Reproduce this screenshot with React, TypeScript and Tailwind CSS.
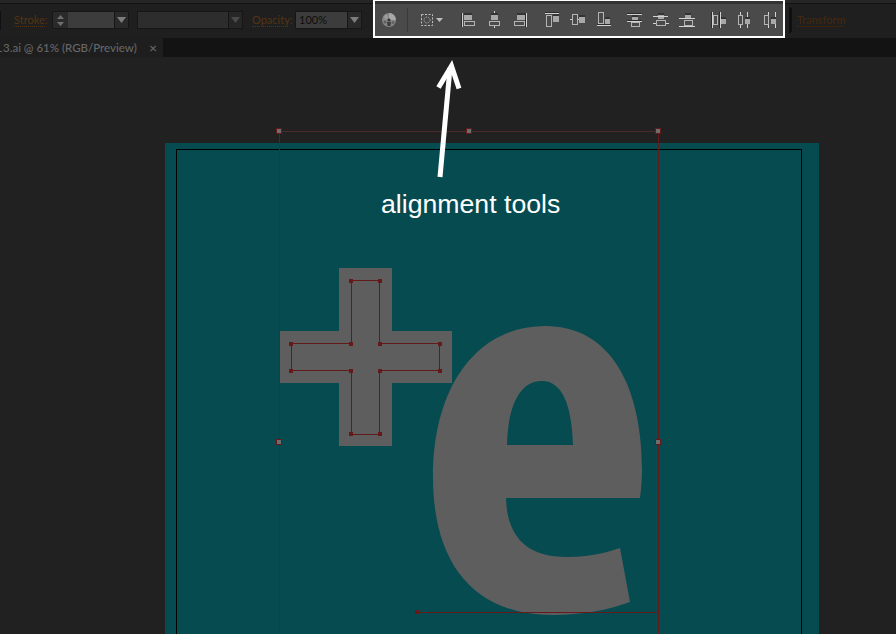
const uiFont = { fontFamily: 'Lato, "Open Sans", "Liberation Sans", sans-serif' };

function Arrow({ color = "#7d7d7d" }: { color?: string }) {
  return (
    <svg width="9" height="6" viewBox="0 0 9 6">
      <path d="M0 0H9L4.5 6Z" fill={color} />
    </svg>
  );
}

function Label({ text, width, color = "#553413" }: { text: string; width: string; color?: string }) {
  return (
    <span
      className={`block whitespace-nowrap border-b border-dotted text-[11px] leading-[13px] ${width}`}
      style={{ color, borderColor: color, ...uiFont }}
    >
      {text}
    </span>
  );
}

// filled block with the dark top edge these icons have
function Block({ x, y, w, h }: { x: number; y: number; w: number; h: number }) {
  return (
    <>
      <rect x={x} y={y} width={w} height={h} fill="#a8a8a8" />
      <rect x={x} y={y} width={w} height={2} fill="#333333" />
    </>
  );
}

function Box({ x, y, w, h }: { x: number; y: number; w: number; h: number }) {
  return <rect x={x + 0.5} y={y + 0.5} width={w - 1} height={h - 1} fill="none" stroke="#b4b4b4" />;
}

function HLine({ x, y, w }: { x: number; y: number; w: number }) {
  return (
    <>
      <rect x={x} y={y - 1} width={w} height={1} fill="#2c2c2c" />
      <rect x={x} y={y} width={w} height={1} fill="#d2d2d2" />
    </>
  );
}

function VLine({ x, y, h }: { x: number; y: number; h: number }) {
  return (
    <>
      <rect x={x - 1} y={y} width={1} height={h} fill="#2c2c2c" />
      <rect x={x} y={y} width={1} height={h} fill="#d2d2d2" />
    </>
  );
}

const alignIcons = [
  {
    x: 456,
    w: 25,
    draw: (
      <>
        <VLine x={462} y={13} h={14} />
        <Block x={464} y={13} w={8} h={7} />
        <Box x={464} y={21} w={11} h={5} />
      </>
    ),
  },
  {
    x: 481,
    w: 26,
    draw: (
      <>
        <Block x={491} y={13} w={7} h={7} />
        <Box x={489} y={21} w={11} h={5} />
        <rect x={494} y={11} width={1} height={2} fill="#d2d2d2" />
        <rect x={494} y={26} width={1} height={2} fill="#d2d2d2" />
      </>
    ),
  },
  {
    x: 507,
    w: 29,
    draw: (
      <>
        <VLine x={526} y={13} h={14} />
        <Block x={517} y={13} w={8} h={7} />
        <Box x={514} y={21} w={11} h={5} />
      </>
    ),
  },
  {
    x: 536,
    w: 29,
    draw: (
      <>
        <HLine x={545} y={13} w={14} />
        <Box x={546} y={15} w={6} h={12} />
        <Block x={553} y={14} w={6} h={8} />
      </>
    ),
  },
  {
    x: 565,
    w: 26,
    draw: (
      <>
        <rect x={570} y={19} width={15} height={1} fill="#c8c8c8" />
        <rect x={572} y={14} width={6} height={11} fill="#4a4a4a" />
        <Box x={572} y={14} w={6} h={11} />
        <Block x={579} y={15} w={6} h={8} />
      </>
    ),
  },
  {
    x: 591,
    w: 28,
    draw: (
      <>
        <HLine x={597} y={25} w={14} />
        <Box x={598} y={12} w={6} h={12} />
        <Block x={605} y={17} w={5} h={7} />
      </>
    ),
  },
  {
    x: 619,
    w: 28,
    draw: (
      <>
        <HLine x={627} y={14} w={15} />
        <Block x={632} y={15} w={6} h={5} />
        <HLine x={627} y={21} w={15} />
        <Box x={631} y={22} w={9} h={5} />
      </>
    ),
  },
  {
    x: 647,
    w: 26,
    draw: (
      <>
        <Block x={658} y={13} w={6} h={6} />
        <rect x={653} y={16} width={15} height={1} fill="#d2d2d2" />
        <Box x={656} y={20} w={10} h={6} />
        <rect x={653} y={23} width={3} height={1} fill="#d2d2d2" />
        <rect x={666} y={23} width={3} height={1} fill="#d2d2d2" />
      </>
    ),
  },
  {
    x: 673,
    w: 27,
    draw: (
      <>
        <Block x={685} y={13} w={6} h={5} />
        <rect x={679} y={18} width={16} height={1} fill="#d2d2d2" />
        <Box x={684} y={20} w={9} h={6} />
        <rect x={679} y={26} width={16} height={1} fill="#d2d2d2" />
      </>
    ),
  },
  {
    x: 700,
    w: 30,
    draw: (
      <>
        <VLine x={712} y={12} h={16} />
        <Box x={713} y={15} w={5} h={10} />
        <VLine x={720} y={12} h={16} />
        <Block x={721} y={17} w={5} h={7} />
      </>
    ),
  },
  {
    x: 730,
    w: 26,
    draw: (
      <>
        <rect x={740} y={12} width={1} height={16} fill="#d2d2d2" />
        <rect x={738} y={15} width={5} height={10} fill="#4a4a4a" />
        <Box x={738} y={15} w={5} h={10} />
        <rect x={747} y={12} width={1} height={16} fill="#d2d2d2" />
        <Block x={745} y={17} w={5} h={7} />
      </>
    ),
  },
  {
    x: 756,
    w: 27,
    draw: (
      <>
        <rect x={768} y={12} width={1} height={16} fill="#d2d2d2" />
        <Box x={764} y={15} w={5} h={10} />
        <rect x={775} y={12} width={1} height={16} fill="#d2d2d2" />
        <Block x={771} y={17} w={5} h={7} />
      </>
    ),
  },
];

const outlineHandles = [
  [279, 131],
  [469, 131],
  [658, 131],
  [279, 442],
  [658, 442],
];

const crossPoints = [
  [351, 281],
  [380, 281],
  [351, 344],
  [380, 344],
  [291, 344],
  [440, 344],
  [291, 371],
  [351, 371],
  [380, 371],
  [440, 371],
  [351, 434],
  [380, 434],
  [417, 612],
];

function Drawing() {
  return (
    <svg className="absolute inset-0" width="896" height="577" viewBox="0 57 896 577">
      <path
        d="M339 268H392V331H452V383H392V446H339V383H280V331H339Z"
        fill="#5e5e5e"
      />
      <path
        fillRule="evenodd"
        fill="#5e5e5e"
        d="M640 498H506C507 535 525 557 567 557C585 557 603 554 620 548L630 602C608 610 582 615 553 615C475 615 433 565 433 477C433 385 478 326 545 326C610 326 642 385 642 470C642 480 641 490 640 498ZM507 445C508 405 520 381 542 381C562 381 572 405 573 445Z"
      />

      {/* selection */}
      <g fill="none" strokeWidth="1">
        <path d="M279.5 131.5H658.5" stroke="#4a2a2a" />
        <path d="M279.5 131.5V634" stroke="#552428" />
        <path d="M658.5 131.5V634" stroke="#641a1a" />
        <path d="M417 612.5H658.5" stroke="#641a1a" />
        <path
          d="M351.5 280.5H379.5V343.5H439.5V370.5H379.5V434.5H351.5V370.5H291.5V343.5H351.5Z"
          stroke="#641a1a"
        />
      </g>
      {outlineHandles.map(([x, y]) => (
        <rect
          key={`${x}-${y}`}
          x={x - 2.5}
          y={y - 2.5}
          width="5"
          height="5"
          fill="#6e6e6e"
          stroke="#641a1a"
        />
      ))}
      {crossPoints.map(([x, y]) => (
        <rect key={`${x}-${y}`} x={x - 2} y={y - 2} width="4" height="4" fill="#641a1a" />
      ))}

      {/* annotation arrow */}
      <g stroke="#ffffff" strokeWidth="5" fill="none">
        <path d="M440 177L450 68" />
        <path d="M438.5 87.5L451.5 66L459 88.5" />
      </g>
    </svg>
  );
}

export default function App() {
  return (
    <div className="flex h-[634px] w-[896px] flex-col overflow-hidden bg-[#212121]">
      {/* control bar */}
      <div className="flex h-[38px] shrink-0 border-t-[3px] border-[#262626] bg-[#1f1f1f]">
        <div className="flex w-full items-center border-t border-[#121212] pb-[2px]">
          <div className="h-[19px] w-[1px] bg-[#111111]" />
          <div className="ml-[13px]">
            <Label text="Stroke:" width="w-[31px]" />
          </div>
          <div className="ml-[7px] flex h-[18px] border border-[#161616]">
            <div className="flex w-[15px] flex-col items-center justify-center gap-[3px] bg-[#2a2a2a]">
              <svg width="7" height="4" viewBox="0 0 7 4">
                <path d="M0 4L3.5 0L7 4Z" fill="#6e6e6e" />
              </svg>
              <svg width="7" height="4" viewBox="0 0 7 4">
                <path d="M0 0H7L3.5 4Z" fill="#6e6e6e" />
              </svg>
            </div>
            <div className="w-[46px] bg-[#3c3c3c]" />
            <div className="flex w-[14px] items-center justify-center border-l border-[#161616] bg-[#2a2a2a]">
              <Arrow />
            </div>
          </div>
          <div className="ml-[8px] flex h-[18px] w-[106px] border border-[#161616]">
            <div className="flex-1 bg-[#2d2d2d]" />
            <div className="flex w-[14px] items-center justify-center border-l border-[#161616] bg-[#262626]">
              <Arrow color="#4a4a4a" />
            </div>
          </div>
          <div className="ml-[9px]">
            <Label text="Opacity:" width="w-[36px]" />
          </div>
          <div className="ml-[7px] flex h-[18px] border border-[#161616]">
            <div
              className="flex w-[51px] items-center bg-[#3c3c3c] pl-[3px] text-[11px] text-[#0c0c0c]"
              style={uiFont}
            >
              100%
            </div>
            <div className="flex w-[14px] items-center justify-center border-l border-[#161616] bg-[#2a2a2a]">
              <Arrow />
            </div>
          </div>

          {/* highlighted alignment tools */}
          <div className="relative -mt-[4px] ml-[11px] flex h-[38px] w-[412px] shrink-0 items-center self-start border-x-[2px] border-t border-b-[2px] border-white bg-[#4a4a4a] pt-[3px] shadow-[inset_0_3px_0_#333333]">
            <svg className="ml-[6px]" width="16" height="16" viewBox="0 0 16 16">
              <circle cx="8" cy="8" r="7" fill="#858585" />
              <path d="M8 1A7 7 0 0 1 15 8H10L8 6Z" fill="#a8a8a8" />
              <path d="M3 4L6 2L7 6L4 8Z" fill="#9c9c9c" />
              <path d="M6 10L10 10L9.5 14L6.5 14Z" fill="#3f3f3f" />
              <circle cx="4" cy="10" r="1.5" fill="#5e5e5e" />
              <circle cx="12" cy="10.5" r="1.5" fill="#626262" />
              <circle cx="8" cy="8" r="1.5" fill="#333333" />
            </svg>
            <div className="ml-[10px] h-[24px] w-[1px] bg-[#3a3a3a]" />
            <svg className="ml-[12px]" width="26" height="16" viewBox="0 0 26 16">
              <rect x="1.5" y="2.5" width="11" height="11" fill="none" stroke="#c2c2c2" strokeDasharray="2 1.5" />
              <circle cx="7" cy="8" r="3" fill="none" stroke="#a5a5a5" strokeDasharray="1.5 1" />
              <path d="M16 6H23L19.5 10Z" fill="#bdbdbd" />
            </svg>
            <div className="ml-[10px] flex">
              {alignIcons.map((icon) => (
                <svg
                  key={icon.x}
                  width={icon.w}
                  height="22"
                  viewBox={`${icon.x} 9 ${icon.w} 22`}
                  className="block"
                >
                  {icon.draw}
                </svg>
              ))}
            </div>
          </div>

          <div className="ml-[4px] h-[26px] w-[3px] rounded-r-[3px] bg-[#0f0f0f]" />
          <div className="ml-[5px]">
            <Label text="Transform" width="w-[46px]" color="#46290d" />
          </div>
        </div>
      </div>

      {/* document tabs */}
      <div className="flex h-[19px] shrink-0 bg-[#131313]">
        <div
          className="relative flex w-[163px] items-center bg-[#1e1e1e] pl-[3px] text-[11.5px] font-medium text-[#666666]"
          style={uiFont}
        >
          <div className="absolute bottom-[5px] left-0 h-[1px] w-[2px] bg-[#666666]" />
          <span className="whitespace-nowrap">3.ai @ 61% (RGB/Preview)</span>
          <span className="ml-auto mr-[6px] text-[14px] leading-none">×</span>
        </div>
      </div>

      {/* canvas */}
      <div className="relative flex-1">
        <div className="ml-[165px] mt-[86px] h-[520px] w-[654px] bg-[#054b50] pl-[11px] pt-[6px]">
          <div className="h-[520px] w-[626px] border border-black" />
        </div>
        <Drawing />
        <div
          className="absolute left-[381px] top-[131px] text-[26.67px] leading-[32px] whitespace-nowrap text-white"
          style={{ fontFamily: '"Liberation Sans", Arial, sans-serif' }}
        >
          alignment tools
        </div>
      </div>
    </div>
  );
}
